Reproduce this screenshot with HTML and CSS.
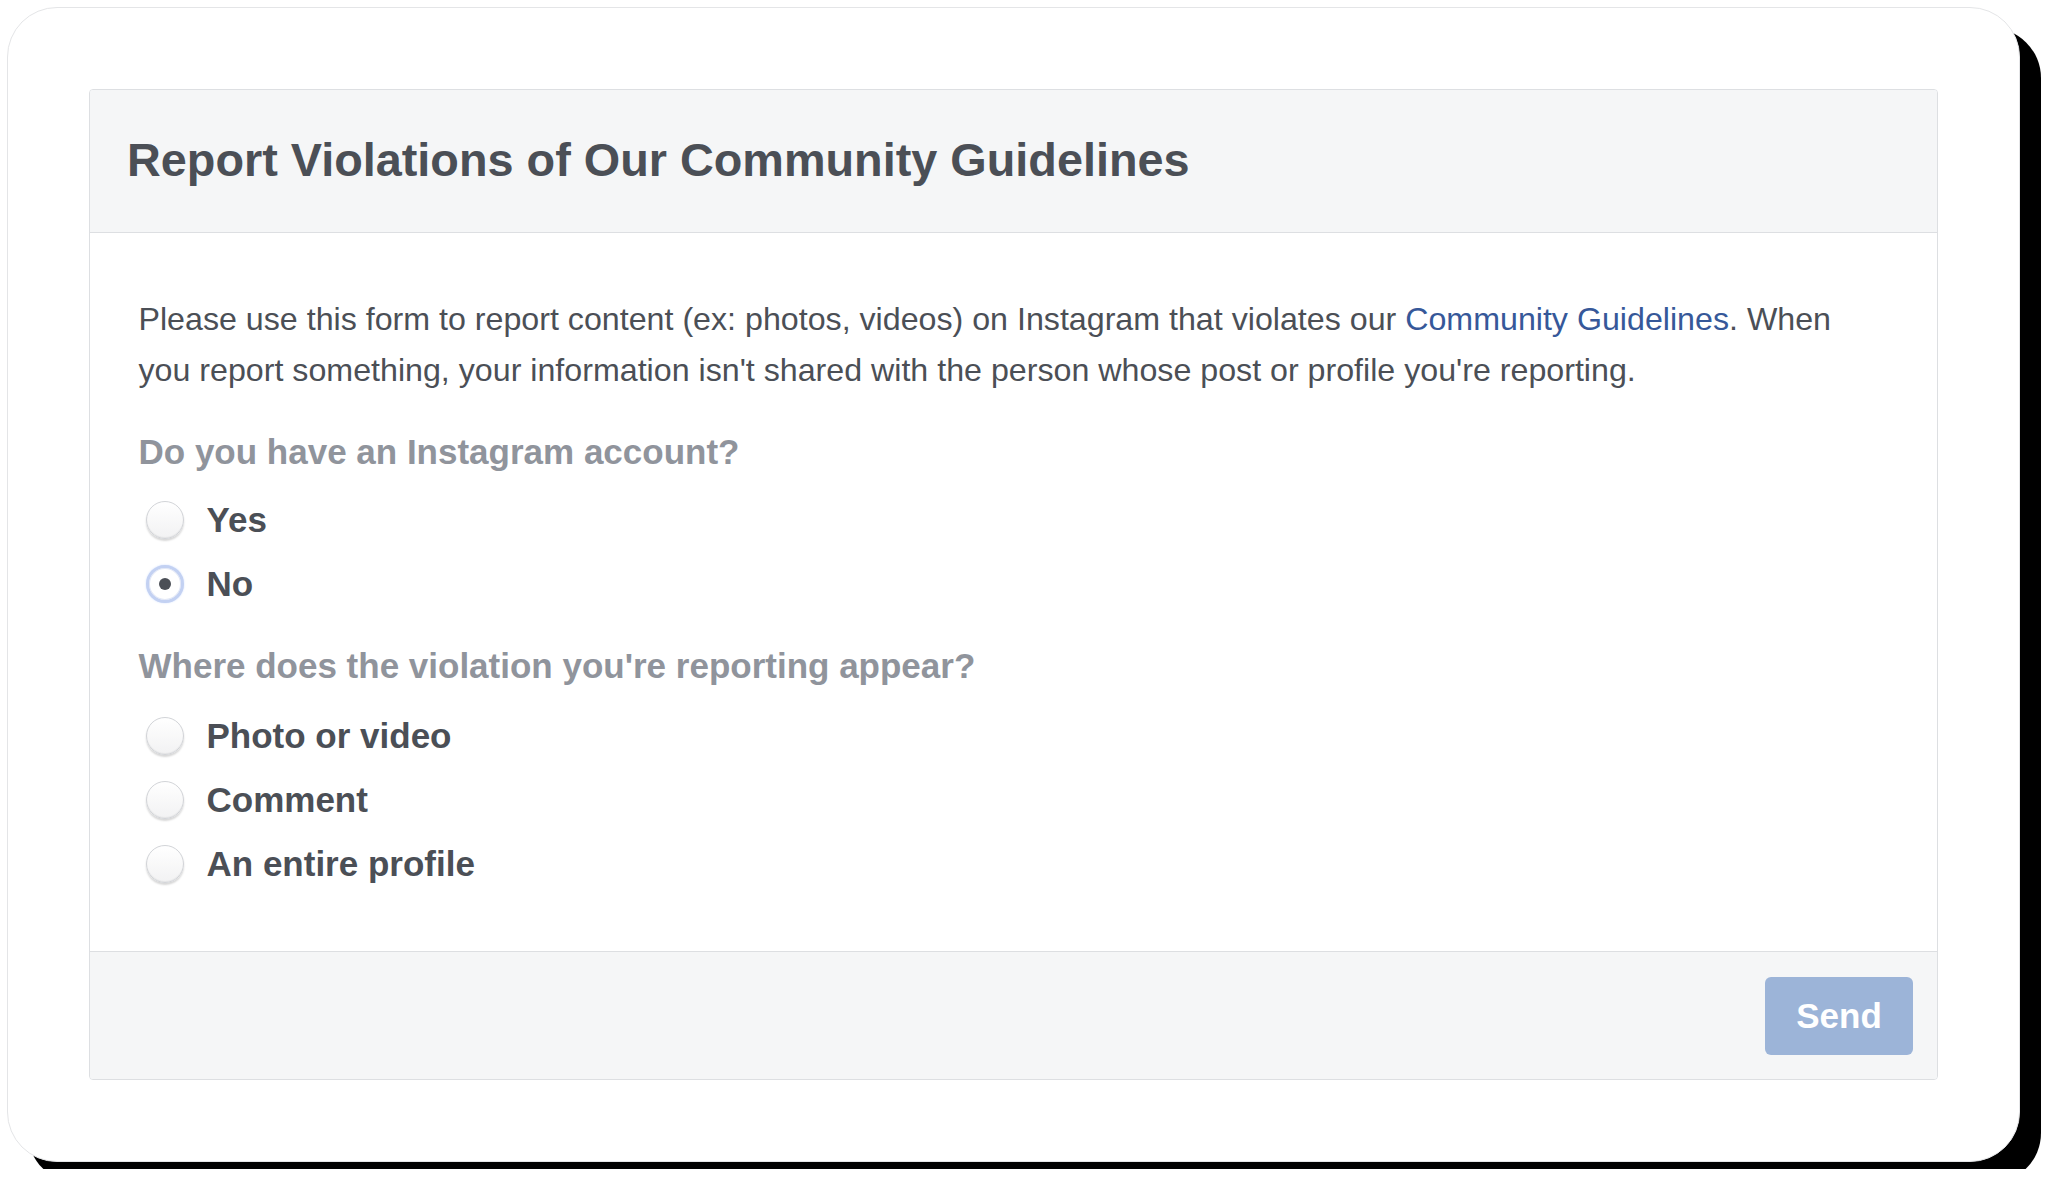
FILE: index.html
```html
<!DOCTYPE html>
<html lang="en">
<head>
<meta charset="utf-8">
<title>Report Violations of Our Community Guidelines</title>
<link rel="stylesheet" href="styles.css">
</head>
<body>
<div class="frame">
  <form class="panel">
    <div class="panel-head">
      <h1 class="panel-title">Report Violations of Our Community Guidelines</h1>
    </div>
    <div class="panel-body">
      <p class="intro">Please use this form to report content (ex: photos, videos) on Instagram that violates our <a class="link" href="#">Community Guidelines</a>. When you report something, your information isn't shared with the person whose post or profile you're reporting.</p>

      <div class="question">Do you have an Instagram account?</div>
      <div class="options">
        <label class="option"><input class="radio" type="radio" name="account"><span class="option-text">Yes</span></label>
        <label class="option"><input class="radio" type="radio" name="account" checked><span class="option-text">No</span></label>
      </div>

      <div class="question question-where">Where does the violation you're reporting appear?</div>
      <div class="options options-where">
        <label class="option"><input class="radio" type="radio" name="where"><span class="option-text">Photo or video</span></label>
        <label class="option"><input class="radio" type="radio" name="where"><span class="option-text">Comment</span></label>
        <label class="option"><input class="radio" type="radio" name="where"><span class="option-text">An entire profile</span></label>
      </div>
    </div>
    <div class="panel-foot">
      <button class="send" type="button" disabled>Send</button>
    </div>
  </form>
</div>
</body>
</html>
```

FILE: styles.css
```css
html, body {
  margin: 0;
  padding: 0;
  background: #ffffff;
}

body {
  font-family: "Liberation Sans", Arial, Helvetica, sans-serif;
  padding: 7px;
}

.frame {
  box-sizing: border-box;
  width: 2013px;
  height: 1155px;
  padding: 81px;
  background: #ffffff;
  border: 1px solid #e4e5e7;
  border-radius: 50px;
  box-shadow: 21px 21px 0 0 #000000;
}

.panel {
  margin: 0;
  box-sizing: border-box;
  height: 991px;
  border: 1px solid #dddfe2;
  border-radius: 4px;
  display: flex;
  flex-direction: column;
  overflow: hidden;
  background: #ffffff;
}

.panel-head {
  height: 143px;
  display: flex;
  align-items: center;
  padding: 0 36px 1px 37px;
  box-sizing: border-box;
  background: #f5f6f7;
  border-bottom: 1px solid #dddfe2;
  flex: none;
}

.panel-title {
  margin: 0;
  font-size: 46.8px;
  font-weight: bold;
  color: #4b4f56;
  line-height: 1.15;
}

.panel-body {
  flex: 1;
  padding: 61px 100px 0 48.5px;
}

.intro {
  margin: 0 0 35px 0;
  font-size: 32.2px;
  line-height: 51px;
  color: #4b4f56;
}

.link {
  color: #365899;
  text-decoration: none;
}

.question {
  font-size: 35px;
  line-height: 42px;
  font-weight: bold;
  color: #90949c;
  margin-bottom: 26px;
}

.question-where {
  margin-bottom: 28px;
}

.options {
  display: flex;
  flex-direction: column;
  gap: 22px;
  margin-bottom: 40px;
}

.options-where {
  margin-bottom: 0;
}

.option {
  display: flex;
  align-items: center;
  height: 42px;
  padding-left: 7px;
  gap: 23px;
}

.option-text {
  font-size: 35px;
  line-height: 42px;
  font-weight: bold;
  color: #4b4f56;
}

.radio {
  -webkit-appearance: none;
  appearance: none;
  margin: 0;
  box-sizing: border-box;
  width: 38px;
  height: 38px;
  border-radius: 50%;
  border: 1px solid #d2d4d8;
  background: linear-gradient(#ffffff, #f2f2f3);
  box-shadow: 0 2px 2px rgba(0, 0, 0, 0.16), inset 0 -1px 1px rgba(0, 0, 0, 0.05);
  display: flex;
  align-items: center;
  justify-content: center;
  flex: none;
}

.radio:checked {
  border: 3px solid #c3d1f2;
  background: #ffffff;
  box-shadow: 0 0 2px rgba(88, 144, 255, 0.3), inset 0 0 0 1px #e4e9f6;
}

.radio:checked::after {
  content: "";
  width: 12px;
  height: 12px;
  border-radius: 50%;
  background: #4b4f56;
}

.panel-foot {
  display: flex;
  justify-content: flex-end;
  padding: 25px 24px 24px 24px;
  background: #f5f6f7;
  border-top: 1px solid #dddfe2;
  flex: none;
}

.send {
  box-sizing: border-box;
  width: 148px;
  height: 78px;
  border: none;
  border-radius: 6px;
  background: #9cb4d8;
  color: #ffffff;
  font-family: "Liberation Sans", Arial, Helvetica, sans-serif;
  font-size: 35px;
  font-weight: bold;
  padding: 0;
}
```
